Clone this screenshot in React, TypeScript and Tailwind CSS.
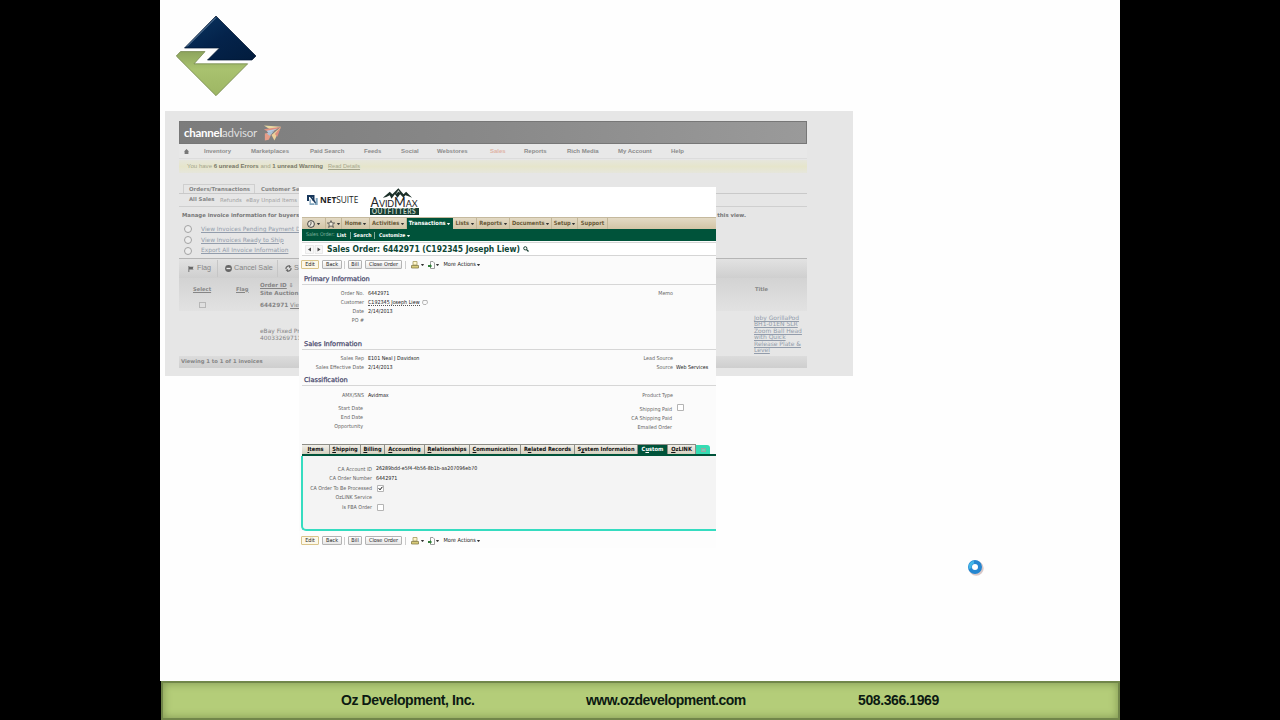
import React from "react";

const VERDANA = "font-['DejaVu_Sans',sans-serif] [font-stretch:normal]";
const TAHOMA = "font-['DejaVu_Sans_Condensed','DejaVu_Sans',sans-serif] [font-stretch:condensed]";
const ARIAL = "font-['Liberation_Sans',sans-serif]";

function OzLogo() {
  return (
    <svg className="block h-[82px] w-[82px]" viewBox="175 15 82 82">
      <defs>
        <linearGradient id="navy" x1="0" y1="0" x2="1" y2="1">
          <stop offset="0" stopColor="#0b3763" />
          <stop offset="0.5" stopColor="#04234b" />
          <stop offset="1" stopColor="#021c3d" />
        </linearGradient>
        <linearGradient id="lime" x1="0" y1="0" x2="0" y2="1">
          <stop offset="0" stopColor="#8ea55d" />
          <stop offset="0.4" stopColor="#a9c26f" />
          <stop offset="1" stopColor="#9db663" />
        </linearGradient>
      </defs>
      <path d="M216 16 256 56 252 60H207.5L219.5 48H184.5Z" fill="url(#navy)" stroke="#021531" strokeWidth=".7" />
      <path d="M187 46.5 216 17.5" stroke="#6a87a6" strokeWidth="1" />
      <path d="M176.3 56 180.5 51.6H205L194 63.8H247.7L216 95.7Z" fill="url(#lime)" stroke="#74864b" strokeWidth=".8" />
    </svg>
  );
}

const caNav: [string, string][] = [
  ["Inventory", "w-[47px]"],
  ["Marketplaces", "w-[59px]"],
  ["Paid Search", "w-[54px]"],
  ["Feeds", "w-[37px]"],
  ["Social", "w-[36px]"],
  ["Webstores", "w-[53px]"],
  ["Sales", "w-[34px]"],
  ["Reports", "w-[43px]"],
  ["Rich Media", "w-[51px]"],
  ["My Account", "w-[53px]"],
  ["Help", "w-[20px]"],
];

function ChannelAdvisor() {
  const links = ["View Invoices Pending Payment Details", "View Invoices Ready to Ship", "Export All Invoice Information"];
  return (
    <section className={`absolute left-[165px] top-[111px] flex h-[265px] w-[688px] flex-col overflow-hidden whitespace-nowrap bg-[#e6e6e6] pl-[14px] pt-[10px] text-[6px] text-[#858585] ${VERDANA}`}>
      <div className="flex h-[23px] w-[628px] shrink-0 items-center border border-[#777] bg-linear-to-r from-[#7c7c7c] via-[#898989] to-[#9a9a9a] pl-1 text-white">
        <div className="w-[79px] font-['Lato',sans-serif] text-[11.5px] leading-none tracking-[-0.25px]">
          <b>channel</b><span className="text-[#dedede]">advisor</span>
        </div>
        <svg className="h-[18px] w-[19px]" viewBox="0 0 20 18">
          <path d="M1 1 19 2.5 8 5.5Z" fill="#e9d9a2" />
          <path d="M1 5 19 2.5 7 9Z" fill="#e08f80" />
          <path d="M4 6.5 15 4.5 6 9.5Z" fill="#b5cbe2" />
          <path d="M2 9.5 10 8 6 16 2 17Z" fill="#e59d88" />
          <path d="M4 9.5 12 6.5 7 12Z" fill="#a8c6da" />
          <path d="M9 11 19 2.5 12 17Z" fill="#ecd09a" />
          <path d="M12.5 10 19 2.5 15 13Z" fill="#dd8e7f" />
        </svg>
      </div>
      <nav className={`flex h-[15px] w-[628px] shrink-0 items-center border-b border-[#dcdcdc] bg-[#e8e8e8] pl-[5px] text-[6px] font-bold text-[#8c8c8c] ${ARIAL}`}>
        <svg className="mr-[15px] h-[5px] w-[5px]" viewBox="0 0 5 5"><path d="M0 2.4 2.5 0 5 2.4H4.4V5H.6V2.4Z" fill="#777" /></svg>
        {caNav.map(([l, w]) => (
          <span key={l} className={`${w} ${l === "Sales" ? "text-[#dfb3a5]" : ""}`}>{l}</span>
        ))}
      </nav>
      <div className={`mt-px flex h-[13px] w-[628px] shrink-0 items-center bg-linear-to-b from-[#e6e6dc] via-[#e6e5cb] to-[#e6e6dc] pl-[8px] text-[6.05px] text-[#a5a58d] ${ARIAL}`}>
        <span>You have <b className="text-[#777768]">6 unread Errors</b> and <b className="text-[#777768]">1 unread Warning</b></span>
        <span className="ml-[5px] text-[5.6px] underline">Read Details</span>
      </div>
      <div className="mt-[10px] flex h-[11px] w-[628px] shrink-0 items-end border-b border-[#c9c9c9] pl-[4px] text-[5.4px] font-bold leading-[8px]">
        <span className="h-[9px] w-[72px] border-x border-t border-[#cfcfcf] pl-[5px]">Orders/Transactions</span>
        <span className="pl-[6px]">Customer Service</span>
      </div>
      <div className="flex h-[13px] w-[628px] shrink-0 items-center border-b border-[#cfcfcf] pl-[10px] text-[5.4px] text-[#a2a2a2]">
        <b className="w-[31px] text-[5.3px] text-[#858585]">All Sales</b><span className="w-[26px]">Refunds</span><span>eBay Unpaid Items</span>
      </div>
      <div className="flex h-[17px] w-[628px] shrink-0 items-center justify-between pl-[3px] text-[5.35px] font-bold text-[#777]">
        <span>Manage invoice information for buyers</span><span className="mr-[61px]">this view.</span>
      </div>
      {links.map((l) => (
        <div key={l} className="flex h-[10.7px] shrink-0 items-center pl-[5px] text-[5.9px] text-[#929cab]">
          <i className="mr-[9px] h-[8px] w-[8px] rounded-full border border-[#a3a3a3] bg-[#ededed]" />
          <span className="underline">{l}</span>
        </div>
      ))}
      <div className={`mt-[2px] flex h-[20px] w-[628px] shrink-0 items-center border-t border-[#b5b5b5] bg-linear-to-b from-[#e2e2e2] to-[#cfcfcf] text-[7.2px] ${ARIAL}`}>
        <div className="flex h-[17px] w-[39px] items-center border-r border-[#c6c6c6] pl-[9px]">
          <svg className="mr-[3px] h-[6px] w-[6px]" viewBox="0 0 6 7"><path d="M0 0H1V7H0ZM1 1H6L5 2.5 6 4H1Z" fill="#666" /></svg>Flag
        </div>
        <div className="flex h-[17px] w-[60px] items-center border-r border-[#c6c6c6] pl-[7px]">
          <svg className="mr-[2px] h-[7px] w-[7px] shrink-0" viewBox="0 0 7 7"><circle cx="3.5" cy="3.5" r="3.4" fill="#666" /><path d="M1.5 3.5H5.5" stroke="#eee" strokeWidth="1.3" /></svg>Cancel Sale
        </div>
        <div className="flex items-center pl-[7px]">
          <svg className="mr-[2px] h-[7px] w-[7px] shrink-0" viewBox="0 0 7 7"><path d="M1 4A2.6 2.6 0 0 1 5 1.4M6 3A2.6 2.6 0 0 1 2 5.6" fill="none" stroke="#666" strokeWidth="1.2" /><path d="M4 0 6.5 2 4 3ZM3 7 .5 5 3 4Z" fill="#666" /></svg>S
        </div>
      </div>
      <div className="flex h-[33px] w-[628px] shrink-0 items-start bg-linear-to-b from-[#d3d3d3] to-[#e2e2e2] pt-[2.5px] text-[5.6px] leading-[8px] text-[#858585]">
        <span className="w-[43px] pl-[14px] pt-[4px] text-[5.2px] font-bold underline">Select</span>
        <span className="w-[38px] pl-[14px] pt-[4px] text-[5.2px] font-bold underline">Flag</span>
        <div className="w-[495px] font-bold"><span className="underline">Order ID</span> ⇩<br />Site Auction</div>
        <span className="pt-[4px] text-[5.2px] font-bold">Title</span>
      </div>
      <div className="-mt-[11px] flex h-[57px] w-[628px] shrink-0 pt-[2px] leading-[7px]">
        <i className="ml-[20px] h-[6px] w-[7px] border border-[#b7b7b7]" />
        <div className="ml-[54px] w-[494px] text-[5.8px]"><b>6442971</b> <u>View</u><div className="mt-[19px] text-[5.9px]">eBay Fixed Price<br />400332697116</div></div>
        <div className="mt-[13px] w-[50px] text-[6px] leading-[6.4px] text-[#929cab] underline">Joby GorillaPod<br />BH1-01EN SLR<br />Zoom Ball Head<br />with Quick<br />Release Plate &amp;<br />Level</div>
      </div>
      <div className="-mt-px flex h-[12px] w-[628px] shrink-0 items-center bg-linear-to-b from-[#dcdcdc] to-[#cecece] pl-[2px] text-[5.25px] font-bold">Viewing 1 to 1 of 1 invoices</div>
    </section>
  );
}

function Caret({ c = "text-[#333]" }: { c?: string }) {
  return (
    <svg className={`ml-[1.5px] h-[2px] w-[3px] shrink-0 ${c}`} viewBox="0 0 3 2"><path d="M0 0H3L1.5 2Z" fill="currentColor" stroke="currentColor" strokeWidth=".3" /></svg>
  );
}

const nsNav: [string, string, boolean][] = [
  ["Home", "w-[28px]", true],
  ["Activities", "w-[37px]", true],
  ["Transactions", "w-[46px]", true],
  ["Lists", "w-[24px]", true],
  ["Reports", "w-[33px]", true],
  ["Documents", "w-[42px]", true],
  ["Setup", "w-[26px]", true],
  ["Support", "w-[30px]", false],
];

function Btn({ label, w, hot }: { label: string; w: string; hot?: boolean }) {
  return (
    <span className={`flex h-[9px] items-center justify-center rounded-[1px] border text-[5.5px] text-[#222] ${w} ${hot ? "border-[#d9c48a] bg-[#fdf8e8]" : "border-[#b3b3b3] bg-linear-to-b from-white to-[#e6e6e6]"}`}>{label}</span>
  );
}

function Actions() {
  return (
    <div className="flex h-[17px] shrink-0 items-center pl-[2px]">
      <Btn label="Edit" w="w-[18px]" hot />
      <i className="w-[3px]" />
      <Btn label="Back" w="w-[20px]" />
      <i className="ml-[2px] mr-[3px] h-[8px] w-px bg-[#ccc]" />
      <Btn label="Bill" w="w-[14px]" />
      <i className="w-[3px]" />
      <Btn label="Close Order" w="w-[37px]" />
      <i className="ml-[3px] h-[8px] w-px bg-[#ccc]" />
      <svg className="ml-[5px] h-[8px] w-[8px]" viewBox="0 0 8 8"><path d="M2 .5H6V4H2Z" fill="#fff6c9" stroke="#a49b5e" strokeWidth=".8" /><path d="M.5 4.5H7.5V7H.5Z" fill="#d8cb79" stroke="#857c48" strokeWidth=".8" /></svg>
      <Caret />
      <svg className="ml-[4px] h-[8px] w-[7px]" viewBox="0 0 7 8"><path d="M2.5.5H5L6.5 2V7.5H2.5Z" fill="#fff" stroke="#888" strokeWidth=".8" /><path d="M0 4H2V3L4 5 2 7V6H0Z" fill="#2f7d36" /></svg>
      <Caret />
      <span className="ml-[4.5px] text-[5.6px] text-[#222]">More Actions</span>
      <Caret />
    </div>
  );
}

function Section({ title }: { title: string }) {
  return <h2 className={`ml-[3px] h-[9px] shrink-0 border-b border-[#d6d6d6] pl-[2px] text-[6.6px] leading-[7.5px] text-[#47476c] [-webkit-text-stroke:0.25px_#47476c] ${VERDANA}`}>{title}</h2>;
}

function Row({ label, value, h = "h-[9px]", right, lw = "w-[65px]", check }: {
  label: string; value?: React.ReactNode; h?: string; right?: [string, React.ReactNode?]; lw?: string; check?: boolean;
}) {
  return (
    <div className={`flex shrink-0 items-center text-[5.35px] ${h}`}>
      <span className={`${lw} text-right text-[#666]`}>{label}</span>
      <span className="ml-[4px] flex w-[240px] items-center text-[#222]">{value}{check !== undefined && <Box on={check} />}</span>
      {right && <><span className="w-[65px] text-right text-[#666]">{right[0]}</span><span className="ml-[3px] text-[#222]">{right[1]}</span></>}
    </div>
  );
}

function Box({ on }: { on?: boolean }) {
  return (
    <svg className="ml-[1px] h-[7px] w-[7px]" viewBox="0 0 7 7">
      <path d="M.5.5H6.5V6.5H.5Z" fill="#fff" stroke="#b4b4b4" />
      {on && <path d="M1.7 3.2 3 4.8 5.4 1.8" fill="none" stroke="#111" strokeWidth="1" />}
    </svg>
  );
}

const tabs: [string, string, string, string][] = [
  ["", "I", "tems", "w-[28px]"],
  ["", "S", "hipping", "w-[31px]"],
  ["", "B", "illing", "w-[24px]"],
  ["", "A", "ccounting", "w-[40px]"],
  ["", "R", "elationships", "w-[45px]"],
  ["", "C", "ommunication", "w-[51px]"],
  ["R", "e", "lated Records", "w-[54px]"],
  ["S", "y", "stem Information", "w-[63px]"],
  ["C", "u", "stom", "w-[30px]"],
  ["", "O", "zLINK", "w-[28px]"],
];

function NetSuite() {
  return (
    <section className={`absolute left-[299px] top-[187px] flex h-[361px] w-[417px] flex-col overflow-hidden whitespace-nowrap bg-[#fbfbfb] ${TAHOMA}`}>
      <header className="flex h-[30px] shrink-0 bg-white pl-[8px]">
        <svg className="mt-[8px] h-[10px] w-[11px]" viewBox="0 0 11 10">
          <path d="M0 0H7.5V6H5.6V2H2V6H0Z" fill="#17375b" />
          <path d="M2.5 1.5 8.5 9 10 8.5 4.5 1.5Z" fill="#17375b" />
          <path d="M2.5 4.5H3.8V8.3H7V10H2.5ZM8.7 3H10.7V10H7.5V8.5H8.7Z" fill="#82a6bf" />
        </svg>
        <span className="ml-[2px] mt-[8px] w-[49px] font-['Open_Sans',sans-serif] text-[8.3px] leading-[10px] text-[#222] [font-stretch:normal]"><b>NET</b>SUITE</span>
        <div className="flex h-[28px] w-[50px] flex-col items-center">
          <svg className="mr-[-6px] h-[13px] w-[31px] shrink-0" viewBox="0 0 36 14">
            <path d="M1 12 9 5 12 8 19 1 25 8 28 5 35 12 30 10 27 9 25 12 21 8 18 12 15 8 11 13 9 9 5 11Z" fill="#1b2f28" />
            <path d="M19 3 21 6 19 5 16 8Z" fill="#dfe6e2" />
          </svg>
          <span className="h-[8px] font-['Lato',sans-serif] text-[12.6px] leading-[6px] tracking-[-0.1px] text-[#222] [font-variant:small-caps]">AvidMax</span>
          <span className="h-[7px] w-[49px] bg-[#173d33] text-center font-['Lato',sans-serif] text-[6.6px] font-bold leading-[7px] tracking-[0.5px] text-[#c3d2c5]">OUTFITTERS</span>
        </div>
      </header>
      <nav className="ml-[3px] flex h-[12px] shrink-0 items-stretch border-t border-[#c5b99e] bg-linear-to-b from-[#e3dac5] to-[#d2c4a5] text-[5.75px] font-bold text-[#6a5a38]">
        <span className="flex w-[24px] items-center justify-center border-r border-[#c3b697]">
          <svg className="h-[8px] w-[8px]" viewBox="0 0 8 8"><circle cx="4" cy="4" r="3.4" fill="#eee9dc" stroke="#333" strokeWidth=".9" /><path d="M4 1.8V4L2.8 5.8" stroke="#333" fill="none" strokeWidth=".8" /></svg><Caret />
        </span>
        <span className="flex w-[16px] items-center justify-center border-r border-[#c3b697]">
          <svg className="h-[8px] w-[8px] shrink-0" viewBox="0 0 8 8"><path d="M4 .6 5 3H7.6L5.6 4.7 6.4 7.4 4 5.8 1.6 7.4 2.4 4.7.4 3H3Z" fill="#f0ebdc" stroke="#333" strokeWidth=".7" /></svg><Caret />
        </span>
        {nsNav.map(([l, w, caret]) => (
          <span key={l} className={`flex items-center justify-center border-r ${w} ${l === "Transactions" ? "border-[#00533a] bg-[#00533a] text-white" : "border-[#c3b697]"}`}>
            {l}{caret && <Caret c={l === "Transactions" ? "text-white" : "text-[#333]"} />}
          </span>
        ))}
      </nav>
      <div className="ml-[3px] flex h-[12px] shrink-0 items-center bg-[#00533a] text-[5.2px] text-white">
        <span className="w-[31px] pl-[4px] text-[#7eb39f]">Sales Order:</span>
        <b className="w-[18px] border-r border-[#7ea998] text-center leading-[7px]">List</b>
        <b className="w-[24px] border-r border-[#7ea998] text-center leading-[7px]">Search</b>
        <b className="flex items-center pl-[4px] pt-px text-[5px]">Customize<Caret c="text-white" /></b>
      </div>
      <div className="ml-[3px] mt-[1px] flex h-[14px] shrink-0 items-center border-y border-[#d5d5d5] bg-white">
        <svg className="mx-[3px] h-[9px] w-[18px]" viewBox="0 0 18 9"><path d="M.5.5H8.5V8.5H.5ZM10 .5H17.5V8.5H10Z" fill="#f7f7f7" stroke="#ddd" strokeWidth=".6" /><path d="M6 2.5V6.5L3 4.5ZM12.5 2.5V6.5L15.5 4.5Z" fill="#444" /></svg>
        <h1 className="w-[197px] pl-[1px] text-[8.45px] font-bold leading-none text-[#0d4534]">Sales Order: 6442971 (C192345 Joseph Liew)</h1>
        <svg className="h-[6px] w-[6px]" viewBox="0 0 6 6"><circle cx="2.3" cy="2.3" r="1.6" fill="none" stroke="#173e31" /><path d="M3.5 3.5 5.5 5.5" stroke="#173e31" strokeWidth="1.2" /></svg>
      </div>
      <Actions />
      <div className="h-[3px] shrink-0" />
      <Section title="Primary Information" />
      <div className="h-[4px] shrink-0" />
      <Row label="Order No." value="6442971" right={["Memo"]} />
      <Row label="Customer" value={<><span className="border-b border-dotted border-[#555] leading-[6px]">C192345 Joseph Liew</span><svg className="ml-[2px] h-[5px] w-[6px]" viewBox="0 0 6 5"><path d="M1 .5H5L5.5 3 4 4.5H1.5L.5 3Z" fill="none" stroke="#999" strokeWidth=".7" /></svg></>} />
      <Row label="Date" value="2/14/2013" />
      <Row label="PO #" />
      <div className="h-[16px] shrink-0" />
      <Section title="Sales Information" />
      <div className="h-[4px] shrink-0" />
      <Row label="Sales Rep" value="E101 Neal J Davidson" right={["Lead Source"]} />
      <Row label="Sales Effective Date" value="2/14/2013" right={["Source", "Web Services"]} />
      <div className="h-[5px] shrink-0" />
      <Section title="Classification" />
      <div className="h-[5px] shrink-0" />
      <Row label="AMX/SNS" value="Avidmax" right={["Product Type"]} />
      <div className="h-[3px] shrink-0" />
      <div className="flex h-[28px] shrink-0 text-[5.35px] text-[#666]">
        <div className="flex w-[64px] flex-col pt-px text-right leading-[9px]">
          <span>Start Date</span><span>End Date</span><span>Opportunity</span>
        </div>
        <div className="flex w-[309px] flex-col pt-[1.5px] text-right leading-[9.4px]">
          <span>Shipping Paid</span><span>CA Shipping Paid</span><span>Emailed Order</span>
        </div>
        <div className="pl-[4px] pt-[1px]"><Box /></div>
      </div>
      <div className="h-[13px] shrink-0" />
      <div className="ml-[3px] flex h-[12px] shrink-0 items-stretch border-b-2 border-[#00533a] text-[5.7px] font-bold leading-[8px] text-[#111]">
        {tabs.map(([a, u, b, w]) => (
          <span key={u + b} className={`flex items-start justify-center border-r border-t border-[#8d8d86] ${w} ${b === "stom" ? "bg-[#00533a] text-white" : "bg-linear-to-b from-[#f1efe9] to-[#d6d0bf]"}`}>
            {a}<u>{u}</u><span className="whitespace-pre">{b}</span>
          </span>
        ))}
        <span className="mt-[1px] flex w-[14px] items-center justify-center rounded-tr-[3px] bg-[#35dcb3]"><i className="h-[4px] w-[5px] border border-[#95a8a2] bg-[#6ed3b8]" /></span>
      </div>
      <div className="ml-[2px] flex h-[75px] shrink-0 flex-col rounded-bl-[5px] border-b-2 border-l-2 border-[#35dcc0] bg-[#f4f4f4] pt-[8px]">
        <Row lw="w-[69px]" label="CA Account ID" value={<span className="text-[5.25px]">26289bdd-e5f4-4b56-8b1b-aa207096eb70</span>} h="h-[10px]" />
        <Row lw="w-[69px]" label="CA Order Number" value="6442971" />
        <Row lw="w-[69px]" label="CA Order To Be Processed" check={true} h="h-[10px]" />
        <Row lw="w-[69px]" label="OzLINK Service" />
        <Row lw="w-[69px]" label="Is FBA Order" check={false} h="h-[10px]" />
      </div>
      <div className="shrink-0 bg-[#fdfdfd] pt-px"><Actions /></div>
    </section>
  );
}

export default function App() {
  return (
    <div className="flex h-[720px] w-[1280px] justify-center overflow-hidden bg-black">
      <main className="relative flex h-[720px] w-[1280px] flex-col px-[160px]">
        <div className="flex-1 bg-[#fefefe] pl-[15px] pt-[15px]"><OzLogo /></div>
        <ChannelAdvisor />
        <NetSuite />
        <svg className="absolute left-[966px] top-[558px] h-[18px] w-[18px]" viewBox="0 0 18 18">
          <circle cx="10.2" cy="10.2" r="6" fill="none" stroke="#d9c8c8" strokeWidth="3" />
          <circle cx="9" cy="9" r="5" fill="#fff" stroke="#2586d0" strokeWidth="4" />
          <path d="M4.2 10.5A5 5 0 0 1 8 4.1" stroke="#43b7e8" strokeWidth="3" fill="none" />
        </svg>
        <footer className={`ml-px flex h-[39px] items-center whitespace-nowrap border-2 border-[#71864a] bg-[#b4cd79] text-[14px] font-bold tracking-[-0.4px] text-[#0c1a12] shadow-[inset_0_0_8px_#7d9350] ${ARIAL}`}>
          <span className="ml-[178px] w-[245px]">Oz Development, Inc.</span>
          <span className="w-[272px] tracking-[-0.52px]">www.ozdevelopment.com</span>
          <span>508.366.1969</span>
        </footer>
      </main>
    </div>
  );
}
